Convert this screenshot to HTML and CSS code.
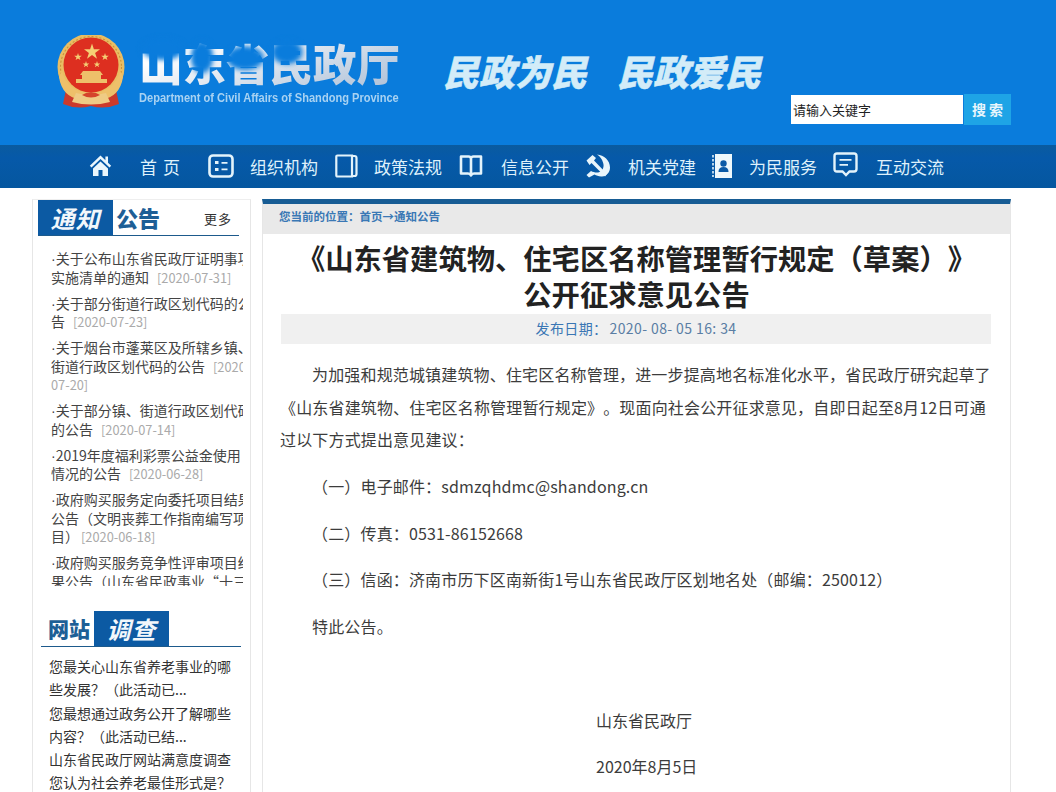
FILE: index.html
```html
<!DOCTYPE html>
<html lang="zh-CN">
<head>
<meta charset="utf-8">
<title>山东省民政厅</title>
<link rel="stylesheet" href="styles.css">
</head>
<body>
<header class="masthead">
  <svg class="emblem" viewBox="0 0 68 74" aria-hidden="true">
    <path d="M10 50 L6 69 Q20 75 34 71 Q48 75 62 69 L58 50 Z" fill="#cb3a2c"/>
    <circle cx="34" cy="32" r="33.500" fill="#e9bd63"/>
    <circle cx="34" cy="32" r="30.500" fill="none" stroke="#c9913a" stroke-width="1.100" stroke-dasharray="2 2"/>
    <circle cx="34" cy="30" r="27.500" fill="#dd2f20"/>
    <path d="M35 8.500l1.900 5.800h6.100l-4.900 3.600 1.900 5.800-5-3.600-5 3.600 1.900-5.800-4.900-3.600h6.100z" fill="#f5cf74"/>
    <path d="M21 18l.9 2.700h2.900l-2.300 1.700.9 2.700-2.400-1.700-2.400 1.700.9-2.700-2.300-1.700h2.900zM48 18l.9 2.700h2.900l-2.300 1.700.9 2.700-2.400-1.700-2.400 1.700.9-2.700-2.300-1.700h2.900zM29 26l.8 2.400h2.500l-2 1.500.8 2.400-2.100-1.500-2.100 1.500.8-2.400-2-1.500h2.500zM40 26l.8 2.400h2.500l-2 1.500.8 2.400-2.100-1.500-2.100 1.500.8-2.400-2-1.500h2.500z" fill="#f5cf74"/>
    <path d="M26 36h17l3 4H23zM25 40h19v4H25zM19 44h31v4H19z" fill="#eec06a"/>
    <path d="M5 36q4 16 20 21h18q16-5 20-21l3 6q-3 20-22 23H24Q5 62 2 42z" fill="#eec06a"/>
    <path d="M19 58q15 4 30 0l4 9q-19 5-38 0z" fill="#efcb85"/>
    <path d="M25 60q9-6 18 0-9 5-18 0z" fill="#d5432b"/>
  </svg>
  <div class="brand">
    <div class="brand-name">山东省民政厅</div>
    <div class="brand-fade"></div>
    <div class="brand-en">Department of Civil Affairs of Shandong Province</div>
  </div>
  <div class="slogans">
    <span class="slogan">民政为民</span>
    <span class="slogan">民政爱民</span>
  </div>
  <form class="search">
    <div class="search-input">请输入关键字</div>
    <div class="search-btn">搜 索</div>
  </form>
</header>

<nav class="nav">
  <a class="nav-item home">
    <svg class="ico" width="23" height="23" viewBox="0 0 23 23"><path d="M11.500 1.500L.8 11.800l1.700 1.800 9-8.600 9 8.600 1.700-1.800-3.200-3.100V2.500h-2.600v3.700zM4 14.500V22h5.500v-6h4v6H19v-7.500l-7.500-7z" fill="#eaf6fc"/></svg>
    <span class="nav-label spaced">首页</span>
  </a>
  <a class="nav-item">
    <svg class="ico" width="26" height="24" viewBox="0 0 26 24"><rect x="1.500" y="1.500" width="23" height="21" rx="3.500" fill="none" stroke="#e3f3fb" stroke-width="2.600"/><path d="M7 7h3.500v3H7zM7 14h3.500v3H7zM13.500 8h6v1.800h-6zM13.500 14.500h6v1.800h-6z" fill="#e3f3fb"/></svg>
    <span class="nav-label">组织机构</span>
  </a>
  <a class="nav-item">
    <svg class="ico" width="23" height="24" viewBox="0 0 23 24"><path d="M2.500 1.500h14.500v21H2.500q-1.200 0-1.200-1.200V2.700q0-1.200 1.200-1.200zM17 2h2.500q2 0 2 2v16q0 2-2 2H17" fill="none" stroke="#e3f3fb" stroke-width="2.200"/></svg>
    <span class="nav-label">政策法规</span>
  </a>
  <a class="nav-item wide">
    <svg class="ico" width="24" height="24" viewBox="0 0 24 24"><path d="M2 2.500h7.500q2.500 0 2.500 2.500 0-2.500 2.500-2.500H22v17h-7q-2 0-3 2-1-2-3-2H2zM12 5v16" fill="none" stroke="#e3f3fb" stroke-width="2.600" stroke-linejoin="round"/></svg>
    <span class="nav-label">信息公开</span>
  </a>
  <a class="nav-item narrow">
    <svg class="ico" width="25" height="24" viewBox="0 0 25 24"><path d="M11 .5C18 1 24 6.500 24 13.500C24 18 21 22 16 22.500C13 22.800 10.500 21.500 8.500 20.500L3 23.500L.5 21L5 17C8 18.500 11 19 13.500 18C17 16.500 18.500 12.500 17 8.500C16 5 14 2.500 11 .5Z" fill="#e8f5fb"/><path d="M.5 6.500L6.500 1L10 4L8 6.500L21 20L19 22.500L5.500 9L3.500 11Z" fill="#e8f5fb"/></svg>
    <span class="nav-label">机关党建</span>
  </a>
  <a class="nav-item narrow">
    <svg class="ico" width="20" height="24" viewBox="0 0 20 24"><path d="M3 0h17v24H3z" fill="#eef8fc"/><path d="M1 1v22" stroke="#e3f3fb" stroke-width="1.600" stroke-dasharray="2.500 1.500"/><circle cx="11.500" cy="9.500" r="3.200" fill="#0a5aa6"/><path d="M6.500 18q0-5 5-5t5 5z" fill="#0a5aa6"/></svg>
    <span class="nav-label">为民服务</span>
  </a>
  <a class="nav-item wide">
    <svg class="ico chat" width="25" height="25" viewBox="0 0 25 25"><path d="M4 1.500h17q2.500 0 2.500 2.500v13q0 2.500-2.500 2.500h-4.500L13 23l-3.500-3.500H4q-2.500 0-2.500-2.500V4Q1.500 1.500 4 1.500z" fill="none" stroke="#e3f3fb" stroke-width="2.400"/><path d="M6.500 7h12v1.800h-12zM6.500 12h8.500v1.800H6.500z" fill="#e3f3fb"/></svg>
    <span class="nav-label">互动交流</span>
  </a>
</nav>

<div class="page">
  <aside class="side">
    <div class="side-head">
      <span class="tag">通知</span>
      <span class="head-text">公告</span>
      <span class="more">更多</span>
    </div>
    <ul class="news">
      <li><span class="dot">·</span>关于公布山东省民政厅证明事项<br>实施清单的通知<span class="when">[2020-07-31]</span></li>
      <li><span class="dot">·</span>关于部分街道行政区划代码的公<br>告<span class="when">[2020-07-23]</span></li>
      <li><span class="dot">·</span>关于烟台市蓬莱区及所辖乡镇、<br>街道行政区划代码的公告<span class="when">[2020-</span><br><span class="date-rest">07-20]</span></li>
      <li><span class="dot">·</span>关于部分镇、街道行政区划代码<br>的公告<span class="when">[2020-07-14]</span></li>
      <li><span class="dot">·</span>2019年度福利彩票公益金使用<br>情况的公告<span class="when">[2020-06-28]</span></li>
      <li><span class="dot">·</span>政府购买服务定向委托项目结果<br>公告（文明丧葬工作指南编写项<br>目）<span class="when tight">[2020-06-18]</span></li>
      <li><span class="dot">·</span>政府购买服务竞争性评审项目结<br>果公告（山东省民政事业“十三五”</li>
    </ul>
    <div class="side-head survey-head">
      <span class="head-text">网站</span>
      <span class="tag">调查</span>
    </div>
    <ul class="survey">
      <li>您最关心山东省养老事业的哪</li>
      <li>些发展？（此活动已...</li>
      <li>您最想通过政务公开了解哪些</li>
      <li>内容？（此活动已结...</li>
      <li>山东省民政厅网站满意度调查</li>
      <li>您认为社会养老最佳形式是？</li>
    </ul>
  </aside>

  <main class="article">
    <div class="crumb">您当前的位置：首页→通知公告</div>
    <h1 class="title">《山东省建筑物、住宅区名称管理暂行规定（草案）》<br>公开征求意见公告</h1>
    <div class="meta"><span class="meta-label">发布日期：</span>2020- 08- 05 16: 34</div>
    <div class="body">
      <p class="lead">为加强和规范城镇建筑物、住宅区名称管理，进一步提高地名标准化水平，省民政厅研究起草了《山东省建筑物、住宅区名称管理暂行规定》。现面向社会公开征求意见，自即日起至8月12日可通过以下方式提出意见建议：</p>
      <p class="lead">（一）电子邮件：sdmzqhdmc@shandong.cn</p>
      <p class="lead">（二）传真：0531-86152668</p>
      <p class="lead">（三）信函：济南市历下区南新街1号山东省民政厅区划地名处（邮编：250012）</p>
      <p class="lead">特此公告。</p>
      <p class="sign">山东省民政厅</p>
      <p class="sign">2020年8月5日</p>
    </div>
  </main>
</div>
</body>
</html>
```
FILE: styles.css
```css
* { box-sizing: border-box; }
html, body { margin: 0; padding: 0; height: 792px; overflow: hidden; background: #fff; }
body { font-family: "Noto Sans CJK SC", "Liberation Sans", sans-serif; color: #333; text-spacing-trim: space-all; }
ul { list-style: none; margin: 0; padding: 0; }
p { margin: 0; }

.masthead { height: 145px; background: #0a7cdc; display: flex; align-items: flex-start; padding-left: 57px; }
.emblem { width: 68px; height: 74px; margin-top: 35px; flex: none; }
.brand { position: relative; width: 262px; margin: 36px 0 0 14px; flex: none; }
.brand-name { font-size: 43.500px; line-height: 54px; font-weight: 900; white-space: nowrap; background: linear-gradient(160deg, #ffffff 20%, #c3d1e2 75%, #aebfd6 100%); -webkit-background-clip: text; background-clip: text; color: transparent; }
.brand-fade { position: absolute; left: 0; top: 0; width: 180px; height: 42px; background:
    radial-gradient(ellipse 24px 13px at 24px 13px, #0a7cdc 70%, transparent),
    radial-gradient(ellipse 13px 19px at 63px 21px, #0a7cdc 70%, transparent),
    radial-gradient(ellipse 22px 14px at 106px 22px, #0a7cdc 70%, transparent),
    radial-gradient(ellipse 18px 14px at 148px 16px, #0a7cdc 70%, transparent);
  filter: blur(2px); }
.brand-en { font-family: "Liberation Sans", sans-serif; font-weight: 700; font-size: 13.500px; line-height: 16px; margin-top: 0; color: #a8d2f2; white-space: nowrap; transform: scaleX(.82); transform-origin: left center; width: 262px; }
.slogans { display: flex; gap: 30px; margin: 48px 0 0 42px; flex: none; }
.slogan { font-size: 36px; line-height: 44px; font-weight: 900; font-style: italic; color: #d3ecf8; -webkit-text-stroke: .5px #d3ecf8; white-space: nowrap; }
.search { display: flex; align-items: center; margin: 94px 0 0 30px; flex: none; }
.search-input { width: 172px; height: 29px; background: #fff; color: #222; font-size: 13px; line-height: 29px; padding-left: 2px; }
.search-btn { width: 47px; height: 31px; margin-left: 1px; background: #1ea4e6; color: #e8f6fc; font-size: 14px; font-weight: 700; line-height: 31px; text-align: center; }

.nav { height: 43px; background: linear-gradient(#0a5b9f, #0659a9 30%, #05579f); display: flex; align-items: center; padding-left: 89px; }
.nav-item { display: flex; align-items: center; color: #dff1fb; flex: none; }
.nav-item .ico { flex: none; margin-top: -2px; }
.nav-label { font-size: 17px; line-height: 24px; white-space: nowrap; margin-left: 16px; margin-right: 17px; width: 68px; }
.home .nav-label { margin-left: 28px; margin-right: 28px; width: 40px; }
.spaced { letter-spacing: 6px; }
.wide .nav-label { margin-left: 18px; }
.narrow .nav-label { margin-left: 17px; margin-right: 16px; }
.nav-item .chat { margin-top: -4px; }

.page { display: flex; align-items: flex-start; gap: 11px; padding: 11px 45px 0 32px; }
.side { width: 219px; height: 640px; border: 1px solid #e6e6e6; border-top-color: #eee; flex: none; overflow: hidden; }
.side-head { height: 36px; margin: 0 11px 0 5px; display: flex; align-items: flex-end; border-bottom: 1px solid #1d5a8c; position: relative; }
.tag { width: 75px; height: 35px; background: #0c5aa3; color: #f2f7fb; font-size: 24px; line-height: 35px; font-weight: 700; font-style: italic; text-align: center; letter-spacing: 1px; }
.head-text { font-size: 22px; line-height: 35px; font-weight: 900; color: #1d5f96; margin-left: 3px; }
.more { position: absolute; right: 7px; bottom: 7px; font-size: 13px; line-height: 18px; color: #333; letter-spacing: 1px; }
.news { height: 337px; margin: 13px 7px 0 18px; overflow: hidden; font-size: 14px; line-height: 18.500px; color: #444; white-space: nowrap; }
.news li { margin-bottom: 7.500px; }
.dot { font-family: "Liberation Sans", sans-serif; line-height: 1; }
.when { color: #aaa; font-size: 12.800px; line-height: 1; margin-left: 8px; }
.when.tight { margin-left: 2px; }
.date-rest { color: #aaa; font-size: 12.800px; line-height: 1; }
.survey-head { margin: 25px 9px 0 8px; }
.survey-head .head-text { font-size: 21px; margin: 0 4px 0 7px; }
.survey { margin: 8px 0 0 16px; font-size: 14px; line-height: 23.300px; color: #333; white-space: nowrap; }

.article { width: 749px; height: 600px; flex: none; border: 1px solid #e6e6e6; border-top: 5px solid #175c94; overflow: hidden; }
.crumb { height: 30px; background: #e9e9e9; padding-left: 16px; font-size: 11.500px; font-weight: 700; line-height: 24px; color: #3a78b5; }
.title { margin: 6px 0 0; font-size: 28.300px; line-height: 36px; font-weight: 700; text-align: center; color: #222; }
.meta { height: 30px; margin: 2px 19px 0 18px; background: #f0f0f0; text-align: center; font-size: 14px; line-height: 29px; color: #5a7ea4; letter-spacing: .4px; }
.meta-label { color: #3a76b4; margin-right: 2px; }
.body { padding: 14px 16px 0 17px; font-size: 16px; line-height: 32.500px; color: #3c3c3c; }
.body p { margin-bottom: 14.300px; }
.lead { text-indent: 32px; letter-spacing: .16px; }
.sign { padding-left: 316px; }
.lead + .sign { margin-top: 61px; }
```
